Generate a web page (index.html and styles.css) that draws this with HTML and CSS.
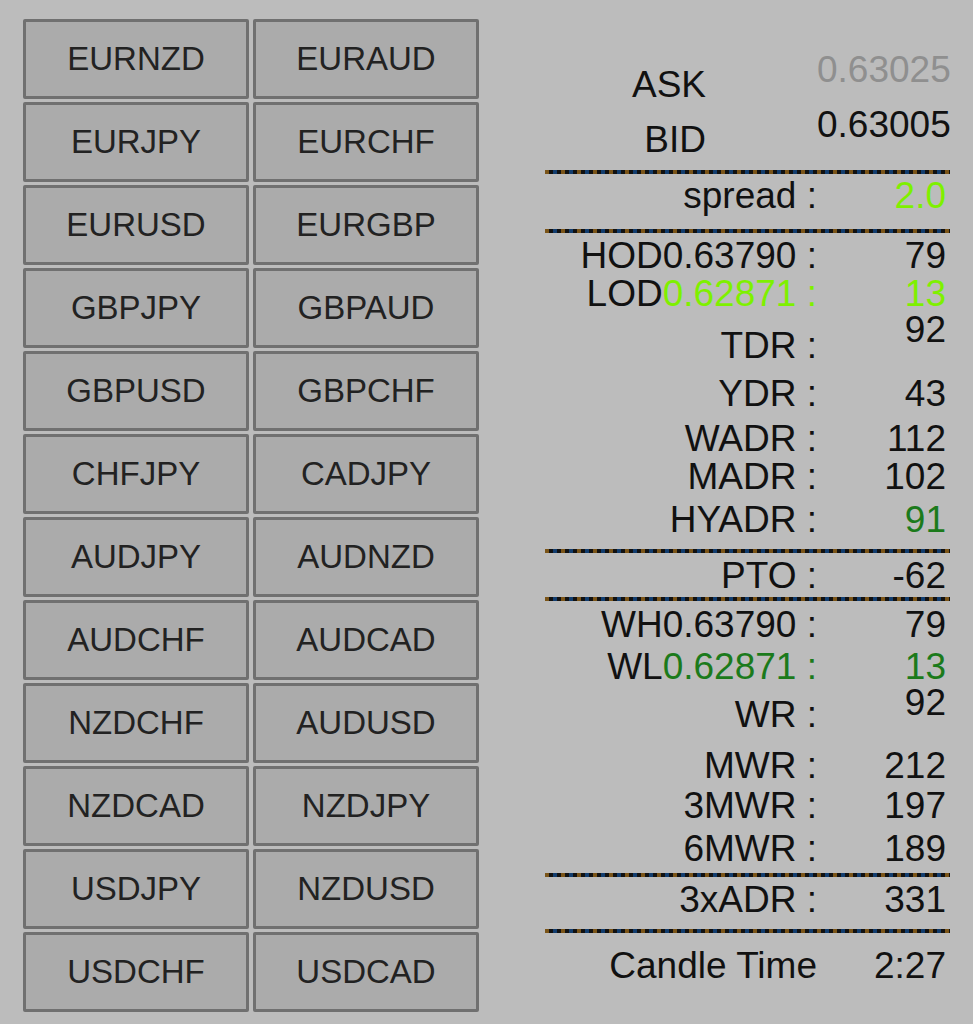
FILE: index.html
```html
<!DOCTYPE html>
<html>
<head>
	<title>Symbol Panel</title>
	<link rel="stylesheet" href="styles.css">
</head>
<body>
	<div class="wrap">
		<div class="symbols">
			<button type="button" class="sym">EURNZD</button>
			<button type="button" class="sym">EURAUD</button>
			<button type="button" class="sym">EURJPY</button>
			<button type="button" class="sym">EURCHF</button>
			<button type="button" class="sym">EURUSD</button>
			<button type="button" class="sym">EURGBP</button>
			<button type="button" class="sym">GBPJPY</button>
			<button type="button" class="sym">GBPAUD</button>
			<button type="button" class="sym">GBPUSD</button>
			<button type="button" class="sym">GBPCHF</button>
			<button type="button" class="sym">CHFJPY</button>
			<button type="button" class="sym">CADJPY</button>
			<button type="button" class="sym">AUDJPY</button>
			<button type="button" class="sym">AUDNZD</button>
			<button type="button" class="sym">AUDCHF</button>
			<button type="button" class="sym">AUDCAD</button>
			<button type="button" class="sym">NZDCHF</button>
			<button type="button" class="sym">AUDUSD</button>
			<button type="button" class="sym">NZDCAD</button>
			<button type="button" class="sym">NZDJPY</button>
			<button type="button" class="sym">USDJPY</button>
			<button type="button" class="sym">NZDUSD</button>
			<button type="button" class="sym">USDCHF</button>
			<button type="button" class="sym">USDCAD</button>
		</div>

		<div class="stats">
			<div class="lbl quote">ASK</div>
			<div class="val top ask">0.63025</div>
			<div class="lbl quote">BID</div>
			<div class="val top">0.63005</div>
			<div class="sep"></div>

			<div class="lbl">spread :</div>
			<div class="val lime">2.0</div>
			<div class="sep"></div>

			<div class="lbl">HOD0.63790 :</div>
			<div class="val">79</div>
			<div class="lbl">LOD<span class="lime">0.62871 :</span></div>
			<div class="val lime">13</div>
			<div class="lbl">TDR :</div>
			<div class="val lift-lg">92</div>
			<div class="lbl">YDR :</div>
			<div class="val">43</div>
			<div class="lbl">WADR :</div>
			<div class="val">112</div>
			<div class="lbl">MADR :</div>
			<div class="val">102</div>
			<div class="lbl">HYADR :</div>
			<div class="val green">91</div>
			<div class="sep"></div>

			<div class="lbl">PTO :</div>
			<div class="val">-62</div>
			<div class="sep"></div>

			<div class="lbl">WH0.63790 :</div>
			<div class="val">79</div>
			<div class="lbl">WL<span class="green">0.62871 :</span></div>
			<div class="val green">13</div>
			<div class="lbl">WR :</div>
			<div class="val lift-sm">92</div>
			<div class="lbl">MWR :</div>
			<div class="val">212</div>
			<div class="lbl">3MWR :</div>
			<div class="val">197</div>
			<div class="lbl">6MWR :</div>
			<div class="val">189</div>
			<div class="sep"></div>

			<div class="lbl">3xADR :</div>
			<div class="val">331</div>
			<div class="sep"></div>

			<div class="lbl">Candle Time</div>
			<div class="val">2:27</div>
		</div>
	</div>
</body>
</html>
```

FILE: styles.css
```css
body {
	margin: 0;
	background-color: #bcbcbc;
	font-family: "Liberation Sans", Arial, sans-serif;
	color: #111111;
}
.wrap {
	display: flex;
	align-items: flex-start;
}
.symbols {
	display: grid;
	grid-template-columns: 226px 226px;
	grid-auto-rows: 80px;
	column-gap: 4px;
	row-gap: 3px;
	margin: 19px 0 0 23px;
}
.sym {
	box-sizing: border-box;
	margin: 0;
	padding: 0;
	background-color: #ababab;
	border: 3px solid #707070;
	border-radius: 2px;
	font-family: inherit;
	font-size: 33px;
	color: #222222;
	cursor: pointer;
}
.sym:hover {
	background-color: #b3b3b3;
}
.stats {
	display: grid;
	grid-template-columns: 272px 133px;
	grid-template-rows: 55px 55px 14px 42px 17px 43px 38px 52px 48px 45px 38px 43px 13px 43px 5px 44px 42px 48px 51px 40px 43px 8px 43px 13px 53px;
	width: 405px;
	padding-top: 50px;
	margin-left: 66px;
	font-size: 37px;
	line-height: 34px;
}
.lbl,
.val {
	align-self: end;
	padding-bottom: 3px;
	text-align: right;
	white-space: nowrap;
}
.val {
	padding-right: 4px;
}
.lbl.quote {
	padding-right: 111px;
}
.val.top {
	align-self: start;
	padding-top: 3px;
	padding-bottom: 0;
}
.val.lift-lg {
	margin-bottom: 16px;
}
.val.lift-sm {
	margin-bottom: 12px;
}
.ask {
	color: #8f8f8f;
}
.lime {
	color: #7ef000;
}
.green {
	color: #1b7a1b;
}
.sep {
	grid-column: 1 / -1;
	align-self: end;
	height: 4px;
	background: repeating-linear-gradient(90deg, #7a5418 0 4px, #111111 4px 8px, #123d6e 8px 12px, #111111 12px 16px);
}
```
